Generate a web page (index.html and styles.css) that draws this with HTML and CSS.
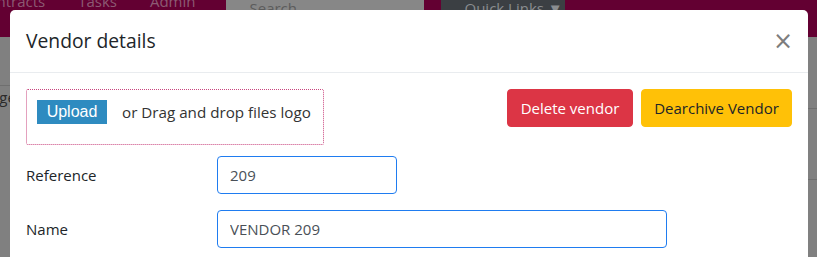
FILE: index.html
```html
<!DOCTYPE html>
<html>
<head>
<meta charset="utf-8">
<link rel="stylesheet" href="styles.css">
</head>
<body>
<div class="page">
  <nav class="navbar">
    <span class="nav-link first">Contracts</span>
    <span class="nav-link">Tasks</span>
    <span class="nav-link">Admin</span>
    <span class="nav-search">Search</span>
    <span class="nav-quick">Quick Links &#9660;</span>
  </nav>
  <div class="page-body">
    <div class="bg-line left"></div>
    <div class="bg-text">Page</div>
    <div class="bg-line right r1"></div>
    <div class="bg-line right r2"></div>
  </div>
</div>
<div class="modal">
  <div class="modal-header">
    <h5 class="modal-title">Vendor details</h5>
    <button class="close" type="button">&times;</button>
  </div>
  <div class="modal-body">
    <div class="top-row">
      <div class="dropzone">
        <span class="upload-btn">Upload</span>
        <span class="dz-text">or Drag and drop files logo</span>
      </div>
      <div class="actions">
        <button class="btn btn-danger" type="button">Delete vendor</button>
        <button class="btn btn-warning" type="button">Dearchive Vendor</button>
      </div>
    </div>
    <div class="form-row">
      <label class="form-label">Reference</label>
      <input class="form-control short" type="text" value="209">
    </div>
    <div class="form-row">
      <label class="form-label">Name</label>
      <input class="form-control wide" type="text" value="VENDOR 209">
    </div>
  </div>
</div>
</body>
</html>
```
FILE: styles.css
```css
* { box-sizing: border-box; }
html, body {
  margin: 0;
  padding: 0;
  width: 817px;
  height: 257px;
  overflow: hidden;
  font-family: "Segoe UI", "Open Sans", "Noto Sans", sans-serif;
  color: #212529;
  background: #808080;
}
.page {
  width: 817px;
  height: 257px;
  display: flex;
  flex-direction: column;
  overflow: hidden;
}
.navbar {
  height: 37px;
  background: #630032;
  display: flex;
  align-items: flex-start;
  flex-shrink: 0;
  white-space: nowrap;
}
.nav-link {
  color: #8c5a73;
  font-size: 15px;
  line-height: 22px;
  margin-top: -10px;
  margin-right: 33px;
}
.nav-link.first { margin-left: -22px; }
.nav-search {
  margin-left: -3px;
  width: 198px;
  height: 30px;
  margin-top: -10px;
  background: #878787;
  color: #5c5c5c;
  font-size: 15px;
  padding: 7px 0 0 24px;
  line-height: 22px;
}
.nav-quick {
  margin-left: 17px;
  width: 124px;
  height: 30px;
  margin-top: -10px;
  background: #3b3f43;
  color: #8a8d90;
  font-size: 15px;
  padding: 7px 0 0 24px;
  line-height: 22px;
}
.page-body {
  flex: 1;
  display: flex;
  flex-direction: column;
}
.bg-line { height: 1px; background: #6f6f6f; flex-shrink: 0; }
.bg-line.left { width: 300px; margin-top: 48px; }
.bg-text { font-size: 15px; line-height: 20px; color: #2a2a2a; margin-left: -18px; margin-top: 1px; height: 20px; }
.bg-line.right { margin-left: 500px; }
.bg-line.r1 { margin-top: 1px; }
.bg-line.r2 { margin-top: 70px; }

.modal {
  position: absolute;
  left: 10px;
  top: 10px;
  width: 798px;
  height: 300px;
  background: #fff;
  border-radius: 5px;
}
.modal-header {
  display: flex;
  align-items: flex-start;
  justify-content: space-between;
  padding: 16px;
  border-bottom: 1px solid #e9ecef;
  height: 63px;
}
.modal-title {
  margin: 0;
  font-size: 19.3px;
  font-weight: 400;
  line-height: 30px;
}
.close {
  border: 0;
  background: transparent;
  padding: 0;
  margin: 0 -1px 0 0;
  font-family: "DejaVu Sans", sans-serif;
  font-size: 24px;
  line-height: 30px;
  font-weight: 400;
  color: #7d7d7d;
  cursor: pointer;
}
.modal-body {
  padding: 16px;
}
.top-row {
  display: flex;
  justify-content: space-between;
  align-items: flex-start;
  margin-bottom: 11px;
}
.dropzone {
  width: 298px;
  height: 56px;
  border: 1px dotted #c9457e;
  border-radius: 2px;
  padding: 10px 10px 0 10px;
  display: flex;
  align-items: flex-start;
  white-space: nowrap;
}
.upload-btn {
  display: inline-block;
  width: 70px;
  height: 24px;
  background: #2e8bc0;
  color: #fff;
  font-family: "Liberation Sans", Arial, sans-serif;
  font-size: 16px;
  line-height: 24px;
  text-align: center;
  flex-shrink: 0;
}
.dz-text {
  margin-left: 15px;
  font-size: 15.2px;
  line-height: 24px;
  color: #333;
}
.actions {
  display: flex;
  gap: 8px;
}
.btn {
  border: 1px solid transparent;
  border-radius: 4px;
  font-family: inherit;
  font-size: 15px;
  line-height: 24px;
  padding: 6px 0;
  height: 38px;
  white-space: nowrap;
  text-align: center;
}
.btn-danger { background: #dc3545; border-color: #dc3545; color: #fff; width: 126px; }
.btn-warning { background: #ffc107; border-color: #ffc107; color: #212529; width: 151px; }
.form-row {
  display: flex;
  align-items: center;
  margin-bottom: 16px;
}
.form-label {
  width: 191px;
  font-size: 15px;
  color: #212529;
}
.form-control {
  height: 38px;
  border: 1px solid #1f7cf0;
  border-radius: 4px;
  padding: 6px 12px;
  font-family: inherit;
  font-size: 15px;
  color: #495057;
  background: #fff;
  outline: none;
}
.form-control.short { width: 180px; }
.form-control.wide { width: 450px; }
```
